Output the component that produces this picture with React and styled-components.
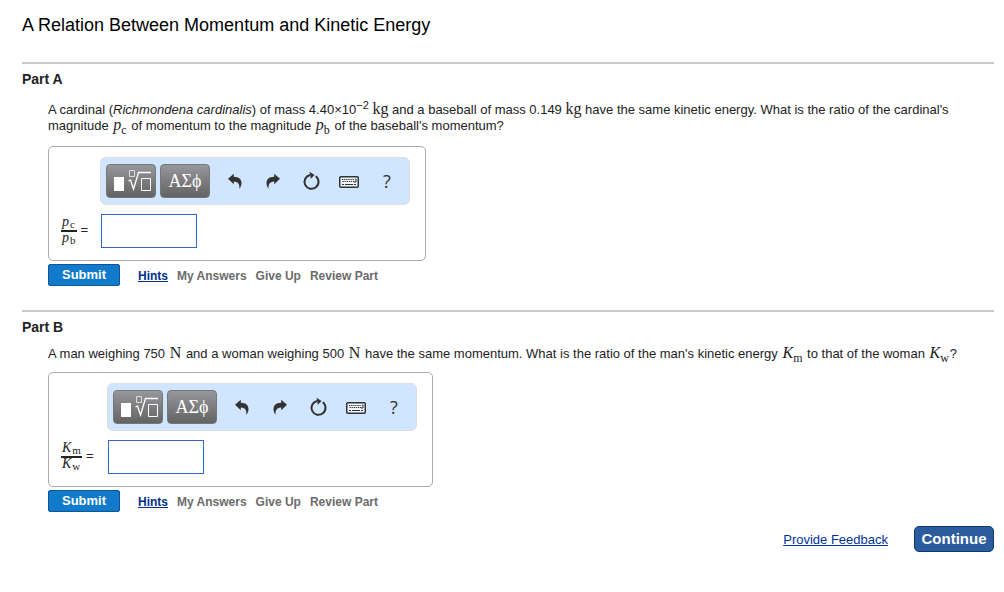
import React from "react";
import styled, { createGlobalStyle } from "styled-components";

const GlobalStyle = createGlobalStyle`
  * { box-sizing: border-box; }
  body {
    margin: 0;
    background: #fff;
    color: #222;
    font: 13px/16px "Liberation Sans", Arial, sans-serif;
  }
`;

const Page = styled.main`
  padding: 14px 10px 0 22px;
`;

const Title = styled.h1`
  margin: 0 0 26px;
  font-size: 18px;
  line-height: 22px;
  font-weight: 400;
  color: #000;
`;

const Part = styled.section`
  border-top: 2px solid #ccc;
  padding: 7px 0 24px;

  &:last-of-type {
    padding-bottom: 14px;
  }
`;

const PartHeading = styled.h2`
  margin: 0;
  font-size: 14px;
  line-height: 16px;
  font-weight: 700;
`;

const PartBody = styled.div`
  padding-left: 26px;
`;

const Question = styled.p`
  margin: 0;
  padding: ${(p) => (p.$roomy ? "15px 0 12px" : "11px 0 10px")};
`;

const Unit = styled.span`
  padding: 0 ${(p) => (p.$spaced ? 1 : 0)}px;
  font: 16px/1 "Liberation Serif", "Times New Roman", serif;
  line-height: 0;
`;

const Exponent = styled.sup`
  font-size: 11px;
  line-height: 0;
`;

const Symbol = styled.span`
  margin: 0 ${(p) => (p.$small ? 0 : 1)}px;
  font-family: "Liberation Serif", "Times New Roman", serif;
  font-size: ${(p) => (p.$small ? 14 : 16)}px;
  line-height: 0;
  white-space: nowrap;

  sub {
    font-size: ${(p) => (p.$small ? 11 : 12)}px;
    line-height: 0;
    margin-left: ${(p) => (p.$small ? 1 : 0)}px;
    vertical-align: ${(p) => (p.$small ? -2 : -4)}px;
  }
`;

const AnswerBox = styled.div`
  display: grid;
  grid-template-columns: ${(p) => p.$labelWidth}px auto;
  row-gap: 9px;
  align-items: center;
  width: fit-content;
  padding: 10px 15px 12px 11px;
  border: 1px solid #aaa;
  border-radius: 5px;
`;

const Toolbar = styled.div`
  grid-column: 2;
  display: flex;
  align-items: flex-start;
  width: 310px;
  height: 48px;
  padding: 6px 0 6px 5px;
  border: 1px solid #ddd;
  border-radius: 6px;
  background: #d0e5ff;
`;

const PaletteGroup = styled.div`
  display: flex;
  gap: 4px;
  margin-right: 6px;
`;

const PaletteButton = styled.button`
  display: flex;
  align-items: center;
  justify-content: center;
  width: 50px;
  height: 34px;
  padding: 0;
  border: 1px solid #777;
  border-radius: 4px;
  background: linear-gradient(#97979c, #636363);
  color: #fff;
  font: 18px/32px "Liberation Serif", "DejaVu Serif", serif;
`;

const ToolButton = styled.button`
  display: flex;
  flex-shrink: 0;
  align-items: center;
  justify-content: center;
  width: 38px;
  height: 34px;
  padding: 0;
  border: 0;
  background: none;
  color: #333;
  font: 18px/34px "Open Sans", sans-serif;
`;

const AnswerLabel = styled.label`
  display: flex;
  align-items: center;
  gap: 4px;
  padding: 0 0 2px 1px;
  font-size: 13px;
`;

const Fraction = styled.span`
  display: flex;
  flex-direction: column;
`;

const Term = styled.span`
  height: 14px;
  padding: 0 1px;
  line-height: 12px;

  & + & {
    border-top: ${(p) => p.$bar}px solid #222;
  }
`;

const AnswerInput = styled.input`
  width: 96px;
  height: 34px;
  margin: 0 0 0 1px;
  padding: 0 6px;
  border: 1px solid #36c;
  border-radius: 0;
  background: #fff;
  font: 16px "Liberation Serif", serif;
`;

const Actions = styled.div`
  display: flex;
  align-items: center;
  gap: 9px;
  margin-top: 3px;
`;

const SubmitButton = styled.button`
  width: 72px;
  height: 22px;
  margin-right: 9px;
  padding: 0;
  border: 1px solid #0c5696;
  border-radius: 2px;
  background: #117acb;
  color: #fff;
  font: 700 13px/20px "Liberation Sans", Arial, sans-serif;
`;

const ActionLink = styled.a`
  padding-top: 2px;
  font-size: 12px;
  font-weight: 700;
  color: ${(p) => (p.$active ? "#003087" : "#6b6b6b")};
  text-decoration: ${(p) => (p.$active ? "underline" : "none")};
`;

const Footer = styled.footer`
  display: flex;
  justify-content: flex-end;
  align-items: center;
  gap: 26px;
`;

const FeedbackLink = styled.a`
  padding-top: 2px;
  color: #003399;
  text-decoration: underline;
`;

const ContinueButton = styled.button`
  width: 80px;
  height: 26px;
  padding: 0;
  border: 1px solid #0b3a70;
  border-radius: 5px;
  background: #2b5c9e;
  color: #fff;
  font: 700 15px/24px "Liberation Sans", Arial, sans-serif;
`;

const TemplatesIcon = () => (
  <svg width="40" height="26" viewBox="0 0 40 26" fill="none" aria-hidden="true">
    <path d="M3 9h10v14H3z" fill="#fff" />
    <path d="M18.5 2.500h5v6h-5z" stroke="#ddd" />
    <path d="M17.500 13l2-1 3 9L27.500 4.500H40" stroke="#fff" strokeWidth="1.3" />
    <path d="M30.500 10.500h9v12h-9z" stroke="#fff" />
  </svg>
);

const UndoIcon = () => (
  <svg width="14" height="16" viewBox="0 0 14 16" aria-hidden="true">
    <path d="M0 5.800L5.800 0.800V3.700C11 3.700 13.600 6.500 13.500 10.200C13.400 12.500 12.600 14.300 11.300 15.800C11.900 11.500 10.500 8.600 5.800 8.400V11.200Z" fill="#333" />
  </svg>
);

const RedoIcon = () => (
  <svg width="14" height="16" viewBox="0 0 14 16" aria-hidden="true">
    <path d="M14 5.800L8.200 0.800V3.700C3 3.700 0.400 6.500 0.500 10.200C0.600 12.500 1.400 14.300 2.700 15.800C2.100 11.500 3.500 8.600 8.200 8.400V11.200Z" fill="#333" />
  </svg>
);

const ResetIcon = () => (
  <svg width="18" height="20" viewBox="0 0 18 20" aria-hidden="true">
    <path d="M13.800 5.300A7 7 0 1 1 8 4" fill="none" stroke="#333" strokeWidth="2" />
    <path d="M7.500 0.800L12.600 4L8.800 7.700Z" fill="#333" />
  </svg>
);

const KeyboardIcon = () => (
  <svg width="20" height="16" viewBox="0 0 20 16" aria-hidden="true">
    <rect x="0.750" y="3.750" width="18.500" height="10.500" rx="1" fill="#eef5ff" stroke="#333" strokeWidth="1.500" />
    <path d="M3 6.500h12M3.500 8.500h12" stroke="#333" strokeWidth="1.200" strokeDasharray="1.300 0.800" />
    <path d="M16 6h1v3h-2" fill="none" stroke="#333" />
    <path d="M3 11.500h2M6 11.500h8M15 11.500h2" stroke="#333" strokeWidth="1.200" />
  </svg>
);

function Variable({ name, sub, small }) {
  return (
    <Symbol $small={small}>
      <i>{name}</i>
      <sub>{sub}</sub>
    </Symbol>
  );
}

function Answer({ id, name, subs, labelWidth, bar }) {
  return (
    <>
      <AnswerBox $labelWidth={labelWidth}>
        <Toolbar role="toolbar" aria-label="Equation tools">
          <PaletteGroup>
            <PaletteButton type="button" aria-label="Templates">
              <TemplatesIcon />
            </PaletteButton>
            <PaletteButton type="button">ΑΣϕ</PaletteButton>
          </PaletteGroup>
          <ToolButton type="button" aria-label="Undo">
            <UndoIcon />
          </ToolButton>
          <ToolButton type="button" aria-label="Redo">
            <RedoIcon />
          </ToolButton>
          <ToolButton type="button" aria-label="Reset">
            <ResetIcon />
          </ToolButton>
          <ToolButton type="button" aria-label="Keyboard shortcuts">
            <KeyboardIcon />
          </ToolButton>
          <ToolButton type="button">?</ToolButton>
        </Toolbar>
        <AnswerLabel htmlFor={id}>
          <Fraction>
            {subs.map((sub) => (
              <Term key={sub} $bar={bar}>
                <Variable name={name} sub={sub} small />
              </Term>
            ))}
          </Fraction>
          =
        </AnswerLabel>
        <AnswerInput id={id} type="text" />
      </AnswerBox>
      <Actions>
        <SubmitButton type="submit">Submit</SubmitButton>
        <ActionLink href="#hints" $active>Hints</ActionLink>
        <ActionLink href="#answers">My Answers</ActionLink>
        <ActionLink href="#give-up">Give Up</ActionLink>
        <ActionLink href="#review">Review Part</ActionLink>
      </Actions>
    </>
  );
}

export default function App() {
  return (
    <>
      <GlobalStyle />
      <Page>
        <Title>A Relation Between Momentum and Kinetic Energy</Title>
        <Part>
          <PartHeading>Part A</PartHeading>
          <PartBody>
            <Question $roomy>
              A cardinal (<i>Richmondena cardinalis</i>) of mass 4.40×10
              <Exponent>−2</Exponent> <Unit>kg</Unit> and a baseball of mass 0.149{" "}
              <Unit>kg</Unit> have the same kinetic energy. What is the ratio of the
              cardinal's magnitude <Variable name="p" sub="c" /> of momentum to the
              magnitude <Variable name="p" sub="b" /> of the baseball's momentum?
            </Question>
            <Answer id="momentum-ratio" name="p" subs={["c", "b"]} labelWidth={40} bar={1} />
          </PartBody>
        </Part>
        <Part>
          <PartHeading>Part B</PartHeading>
          <PartBody>
            <Question>
              A man weighing 750 <Unit $spaced>N</Unit> and a woman weighing 500{" "}
              <Unit $spaced>N</Unit> have the same momentum. What is the ratio of the
              man's kinetic energy <Variable name="K" sub="m" /> to that of the woman{" "}
              <Variable name="K" sub="w" />?
            </Question>
            <Answer id="energy-ratio" name="K" subs={["m", "w"]} labelWidth={47} bar={2} />
          </PartBody>
        </Part>
        <Footer>
          <FeedbackLink href="#feedback">Provide Feedback</FeedbackLink>
          <ContinueButton type="button">Continue</ContinueButton>
        </Footer>
      </Page>
    </>
  );
}
